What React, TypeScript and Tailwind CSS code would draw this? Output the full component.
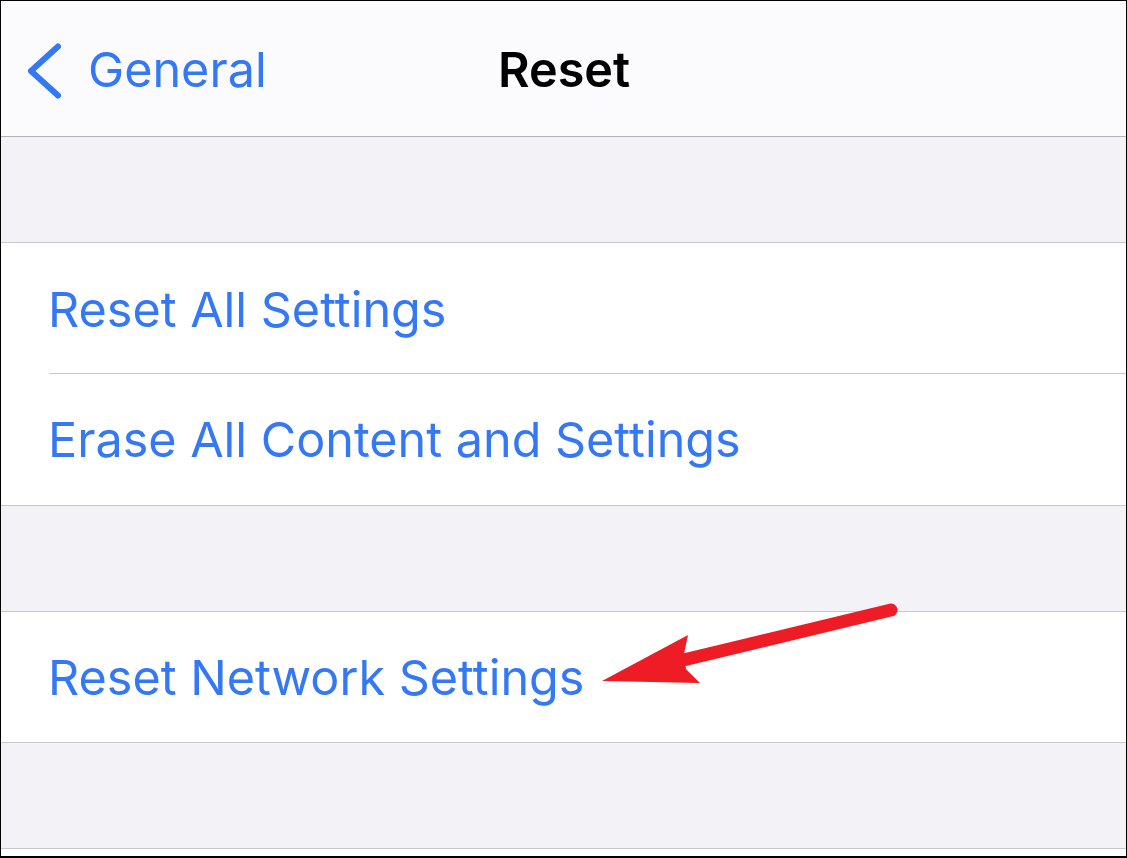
import React from 'react';

const Gap = () => <div className="h-[106px] bg-[#f2f2f7] border-b border-[#c8c7cc]" />;

const App = () => {
  return (
    <div className="relative w-[1127px] h-[858px] overflow-hidden border-l border-t border-r border-b-2 border-black bg-white font-['Inter',sans-serif]">
      <div className="relative h-[136px] bg-[#fbfafd] border-b border-[#b2b2b2] flex items-center pt-[4px]">
        <div className="flex items-center text-[#3478f6]">
          <svg width="40" height="62" viewBox="0 0 40 62" className="ml-[24px] mr-[23px]">
            <path d="M33 6.5 L6 31 L33 55.5" fill="none" stroke="#3478f6" strokeWidth="6" strokeLinecap="round" strokeLinejoin="round" />
          </svg>
          <span className="text-[48.5px]">General</span>
        </div>
        <span className="absolute left-[497px] text-[48.5px] font-semibold text-black">Reset</span>
      </div>
      <Gap />
      <div className="relative h-[131px] flex items-center pt-[3px] bg-white">
        <span className="pl-[47px] text-[48.5px] text-[#3478f6]">Reset All Settings</span>
        <div className="absolute bottom-0 left-[48px] right-0 h-px bg-[#c8c7cc]" />
      </div>
      <div className="h-[132px] flex items-center pt-[2px] bg-white border-b border-[#c8c7cc]">
        <span className="pl-[47px] text-[48.5px] text-[#3478f6]">Erase All Content and Settings</span>
      </div>
      <Gap />
      <div className="h-[131px] flex items-center pt-[3px] bg-white border-b border-[#c8c7cc]">
        <span className="pl-[47px] text-[48.5px] text-[#3478f6]">Reset Network Settings</span>
      </div>
      <Gap />
      <div className="h-[7px] bg-white" />

      {/* red callout arrow */}
      <svg className="absolute inset-0 pointer-events-none" width="1127" height="858" viewBox="0 0 1127 858">
        <line x1="890" y1="609" x2="670" y2="662" stroke="#ee1d25" strokeWidth="13" strokeLinecap="round" />
        <path d="M601 680 L687 634 L683 653 L685 668 L699 682 Z" fill="#ee1d25" />
      </svg>
    </div>
  );
};

export default App;
